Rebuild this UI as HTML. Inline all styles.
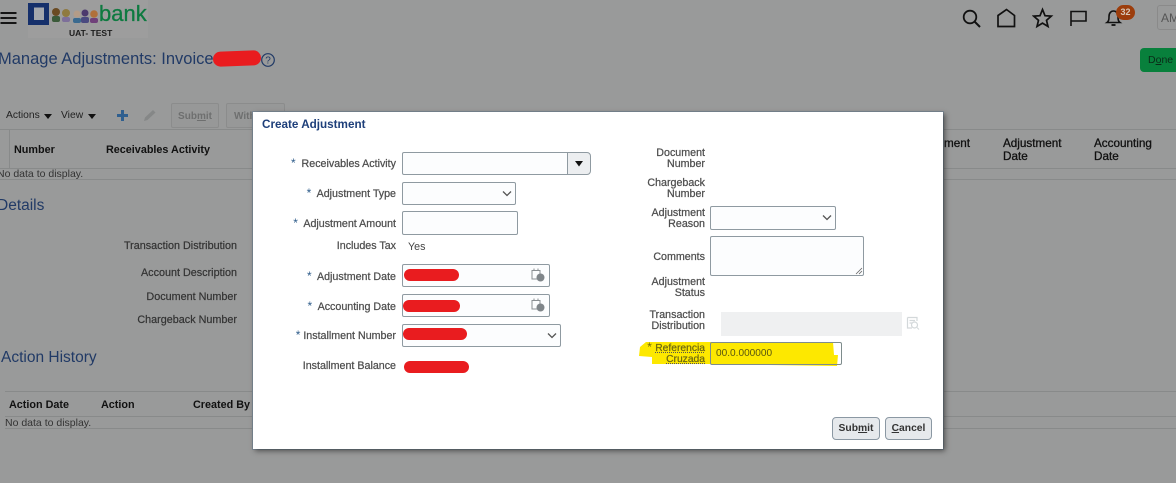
<!DOCTYPE html>
<html>
<head>
<meta charset="utf-8">
<style>
html,body{margin:0;padding:0;}
body{width:1176px;height:483px;overflow:hidden;position:relative;background:#999a9a;font-family:"Liberation Sans",sans-serif;}
.a{position:absolute;white-space:nowrap;}
.t{font-size:16.5px;color:#213a66;}
.h{font-size:10.8px;font-weight:bold;color:#111;line-height:12px;}
.n{font-size:11.7px;color:#111;-webkit-text-stroke:.3px #111;line-height:12.5px;}
.bl{font-size:10.8px;color:#333;-webkit-text-stroke:.2px #333;text-align:right;}
.l{font-size:10.7px;color:#4f4f4f;-webkit-text-stroke:.25px #4f4f4f;text-align:right;line-height:11px;}
.s{color:#2e5c8a;font-size:12px;-webkit-text-stroke:0;}
.i{background:#fcfdfe;border:1px solid #8f9aa1;border-radius:2px;box-sizing:border-box;}
.line{position:absolute;height:1px;background:#888a8a;}
.red{position:absolute;background:#e91c1f;border-radius:10px;}
.btn{position:absolute;box-sizing:border-box;border:1px solid #8b98a3;border-radius:4px;background:#e6e9ec;font-size:10.3px;font-weight:bold;color:#333;text-align:center;}
#m{position:absolute;left:253px;top:112px;width:690px;height:337px;background:#fff;box-shadow:2px 2px 5px rgba(40,40,40,.65),0 0 0 1px #7d8a96;}
</style>
</head>
<body>
<!-- header -->
<svg class="a" style="left:0;top:10px" width="18" height="16"><path d="M0.5 3H16.500M0.5 8H16.500M0.5 13H16.500" stroke="#151515" stroke-width="2"/></svg>
<div class="a" style="left:28px;top:0;width:120px;height:38px;background:#9d9d9d"></div>
<svg class="a" style="left:28px;top:2px" width="22" height="24"><rect x="0" y="1" width="21" height="22" fill="#16306b"/><path d="M6 5.500H16V18H6z" fill="#a5a8ad"/></svg>
<svg class="a" style="left:50px;top:6px" width="50" height="18">
<circle cx="6" cy="6" r="4" fill="#6a4a22"/><rect x="2" y="10" width="8" height="6" rx="2" fill="#3b5a3a"/>
<circle cx="16" cy="7" r="4" fill="#8f7a40"/><rect x="12" y="11" width="8" height="5" rx="2" fill="#7d6f9a"/>
<circle cx="27" cy="8" r="3.500" fill="#b39c88"/><rect x="23" y="12" width="8" height="5" rx="2" fill="#3a6a8f"/>
<circle cx="35" cy="7" r="3.500" fill="#4c3a6e"/><rect x="31" y="11" width="8" height="6" rx="2" fill="#4a4a80"/>
<circle cx="44" cy="8" r="3.800" fill="#b0703a"/><rect x="40" y="12" width="8" height="5" rx="2" fill="#70407a"/>
</svg>
<div class="a" style="left:99px;top:1px;font-size:22px;color:#0e7a40;-webkit-text-stroke:.3px #0e7a40">bank</div>
<div class="a" style="left:69px;top:28px;font-size:8.500px;font-weight:bold;color:#1c1c1c">UAT- TEST</div>

<div class="a t" style="left:-2px;top:50px;font-size:16.500px">Manage Adjustments: Invoice</div>
<div class="red" style="left:213px;top:51px;width:48px;height:15px;transform:rotate(-2deg)"></div>
<svg class="a" style="left:260px;top:52px" width="16" height="16"><circle cx="8" cy="8" r="6.300" fill="none" stroke="#213a66" stroke-width="1.200"/><text x="8" y="11.500" font-size="10" text-anchor="middle" fill="#213a66" font-family="Liberation Sans">?</text></svg>

<!-- header icons -->
<svg class="a" style="left:960px;top:6px" width="24" height="24"><circle cx="10" cy="11" r="6.300" fill="none" stroke="#111" stroke-width="1.800"/><path d="M14.500 15.500L20 21" stroke="#111" stroke-width="2"/></svg>
<svg class="a" style="left:996px;top:7px" width="22" height="22"><path d="M2 19.500V8.500L10.500 2.500L18.500 8.500V19.500Z" fill="none" stroke="#111" stroke-width="1.700"/></svg>
<svg class="a" style="left:1032px;top:7px" width="22" height="22"><path d="M10.500 2.500L13 8.700L19.300 9.100L14.500 13.300L16 19.500L10.500 16.100L5 19.500L6.500 13.300L1.700 9.100L8 8.700Z" fill="none" stroke="#111" stroke-width="1.700"/></svg>
<svg class="a" style="left:1068px;top:8px" width="22" height="20"><path d="M3 18V3.500H18V13H3" fill="none" stroke="#111" stroke-width="1.600"/></svg>
<svg class="a" style="left:1104px;top:8px" width="20" height="20"><path d="M3 14.500C5 13 5 11 5 8.500C5 5 7 3 9.500 3C12 3 14 5 14 8.500C14 11 14 13 16 14.500Z" fill="none" stroke="#111" stroke-width="1.600"/><path d="M7.500 17H11.500" stroke="#111" stroke-width="1.800"/></svg>
<div class="a" style="left:1116px;top:5px;width:19px;height:15px;border-radius:8px;background:#9c3d0c;color:#d8c8b8;font-size:9px;font-weight:bold;text-align:center;line-height:15px">32</div>
<div class="a" style="left:1157px;top:5px;width:30px;height:25px;box-sizing:border-box;border:1px solid #8a8a8a;border-radius:3px;color:#555;font-size:12px;line-height:24px;padding-left:3px">AM</div>
<div class="a" style="left:1140px;top:48px;width:50px;height:24px;background:#08803c;border-radius:4px;font-size:10.500px;line-height:24px;color:#0b2a18;padding-left:8px;box-sizing:border-box">D<u>o</u>ne</div>

<!-- toolbar -->
<div class="a" style="left:6px;top:110px;font-size:10.300px;color:#222">Actions</div>
<svg class="a" style="left:43px;top:113px" width="10" height="8"><path d="M1 1H9L5 6Z" fill="#111"/></svg>
<div class="a" style="left:61px;top:110px;font-size:10.300px;color:#222">View</div>
<svg class="a" style="left:87px;top:113px" width="10" height="8"><path d="M1 1H9L5 6Z" fill="#111"/></svg>
<svg class="a" style="left:116px;top:109px" width="13" height="13"><path d="M6.500 1V12M1 6.500H12" stroke="#2f5f8f" stroke-width="3"/></svg>
<svg class="a" style="left:142px;top:108px" width="15" height="15"><path d="M2 13L3 9.500L11 2L13.500 4.500L5.500 12Z" fill="#858787"/></svg>
<div class="a" style="left:171px;top:103px;width:48px;height:25px;box-sizing:border-box;border:1px solid #8b8c8c;border-radius:2px;background:#979898;font-size:10px;font-weight:bold;color:#6e6f6f;text-align:center;line-height:25px">Sub<u>m</u>it</div>
<div class="a" style="left:226px;top:103px;width:59px;height:25px;box-sizing:border-box;border:1px solid #8b8c8c;border-radius:2px;background:#979898;font-size:10px;font-weight:bold;color:#6e6f6f;line-height:25px;padding-left:7px">Withdraw</div>

<!-- table -->
<div class="line" style="left:0;top:129px;width:1176px"></div>
<div class="line" style="left:0;top:168px;width:1176px"></div>
<div class="line" style="left:0;top:179px;width:1176px"></div>
<div class="a" style="left:9px;top:130px;width:1px;height:38px;background:#888a8a"></div>
<div class="a h" style="left:14px;top:144px">Number</div>
<div class="a h" style="left:106px;top:144px">Receivables Activity</div>
<div class="a n" style="left:944px;top:138px">ment</div>
<div class="a n" style="left:1003px;top:138px">Adjustment<br>Date</div>
<div class="a n" style="left:1094px;top:138px">Accounting<br>Date</div>
<div class="a" style="left:-3px;top:168px;font-size:10.500px;color:#333">No data to display.</div>

<div class="a t" style="left:-3px;top:197px;font-size:15.500px">Details</div>
<div class="a bl" style="right:939px;top:240px">Transaction Distribution</div>
<div class="a bl" style="right:939px;top:267px">Account Description</div>
<div class="a bl" style="right:939px;top:291px">Document Number</div>
<div class="a bl" style="right:939px;top:314px">Chargeback Number</div>

<div class="a t" style="left:1px;top:349px;font-size:15.500px">Action History</div>
<div class="line" style="left:5px;top:391px;width:1171px"></div>
<div class="line" style="left:5px;top:416px;width:1171px"></div>
<div class="line" style="left:5px;top:428px;width:1171px"></div>
<div class="a h" style="left:9px;top:399px">Action Date</div>
<div class="a h" style="left:101px;top:399px">Action</div>
<div class="a h" style="left:193px;top:399px">Created By</div>
<div class="a" style="left:5px;top:417px;font-size:10.500px;color:#333">No data to display.</div>

<!-- modal -->
<div id="m"></div>
<div class="a" style="left:262px;top:118px;font-size:11.700px;font-weight:bold;color:#1e3f7a">Create Adjustment</div>

<div class="a l" style="right:780px;top:158px"><span class="s">*</span>&nbsp; Receivables Activity</div>
<div class="a i" style="left:402px;top:152px;width:167px;height:23px;border-radius:2px 0 0 2px"></div>
<div class="a" style="left:567px;top:152px;width:24px;height:23px;box-sizing:border-box;border:1px solid #8f9aa1;border-radius:0 4px 4px 0;background:#eceef0"></div>
<svg class="a" style="left:574px;top:160px" width="10" height="8"><path d="M1 1H9L5 6.500Z" fill="#111"/></svg>

<div class="a l" style="right:780px;top:188px"><span class="s">*</span>&nbsp; Adjustment Type</div>
<div class="a i" style="left:402px;top:182px;width:114px;height:23px"></div>
<svg class="a" style="left:501px;top:189px" width="12" height="9"><path d="M2 2.500L6 6.500L10 2.500" fill="none" stroke="#555" stroke-width="1.300"/></svg>

<div class="a l" style="right:780px;top:218px"><span class="s">*</span>&nbsp; Adjustment Amount</div>
<div class="a i" style="left:402px;top:211px;width:116px;height:24px"></div>

<div class="a l" style="right:780px;top:241px">Includes Tax</div>
<div class="a" style="left:408px;top:241px;font-size:10.700px;color:#444">Yes</div>

<div class="a l" style="right:780px;top:271px"><span class="s">*</span>&nbsp; Adjustment Date</div>
<div class="a i" style="left:402px;top:264px;width:148px;height:23px"></div>
<div class="red" style="left:404px;top:269px;width:55px;height:12px"></div>
<svg class="a" style="left:530px;top:267px" width="16" height="16"><path d="M2 3.500H10V12H2Z" fill="none" stroke="#8a8f92" stroke-width="1"/><path d="M4 1.500V4M8 1.500V4" stroke="#8a8f92"/><circle cx="10.500" cy="10.500" r="4" fill="#7f8589"/></svg>

<div class="a l" style="right:780px;top:301px"><span class="s">*</span>&nbsp; Accounting Date</div>
<div class="a i" style="left:402px;top:294px;width:148px;height:23px"></div>
<div class="red" style="left:403px;top:300px;width:57px;height:12px"></div>
<svg class="a" style="left:530px;top:297px" width="16" height="16"><path d="M2 3.500H10V12H2Z" fill="none" stroke="#8a8f92" stroke-width="1"/><path d="M4 1.500V4M8 1.500V4" stroke="#8a8f92"/><circle cx="10.500" cy="10.500" r="4" fill="#7f8589"/></svg>

<div class="a l" style="right:780px;top:330px"><span class="s">*</span>&nbsp;Installment Number</div>
<div class="a i" style="left:402px;top:324px;width:159px;height:23px"></div>
<div class="red" style="left:403px;top:328px;width:64px;height:12px"></div>
<svg class="a" style="left:546px;top:331px" width="12" height="9"><path d="M2 2.500L6 6.500L10 2.500" fill="none" stroke="#555" stroke-width="1.300"/></svg>

<div class="a l" style="right:780px;top:361px">Installment Balance</div>
<div class="red" style="left:404px;top:361px;width:65px;height:12px"></div>

<div class="a l" style="right:471px;top:148px">Document<br>Number</div>
<div class="a l" style="right:471px;top:178px">Chargeback<br>Number</div>
<div class="a l" style="right:471px;top:208px">Adjustment<br>Reason</div>
<div class="a i" style="left:710px;top:206px;width:126px;height:24px"></div>
<svg class="a" style="left:821px;top:213px" width="12" height="9"><path d="M2 2.500L6 6.500L10 2.500" fill="none" stroke="#555" stroke-width="1.300"/></svg>
<div class="a l" style="right:471px;top:252px">Comments</div>
<div class="a i" style="left:710px;top:236px;width:154px;height:40px"></div>
<svg class="a" style="left:855px;top:267px" width="8" height="8"><path d="M1 7L7 1M4 7L7 4" stroke="#666" stroke-width=".8"/></svg>
<div class="a l" style="right:471px;top:277px">Adjustment<br>Status</div>
<div class="a l" style="right:471px;top:310px">Transaction<br>Distribution</div>
<div class="a" style="left:721px;top:312px;width:181px;height:24px;background:#eff0f1"></div>
<svg class="a" style="left:906px;top:316px" width="14" height="15"><path d="M1.500 1.500H11V5M1.500 1.500V12H6M3.500 4.500H9M3.500 7H6" fill="none" stroke="#d3d8da" stroke-width="1.200"/><circle cx="8.500" cy="9" r="3" fill="none" stroke="#d3d8da" stroke-width="1.200"/><path d="M11 11.500L13 13.500" stroke="#d3d8da"/></svg>

<!-- highlighted -->
<svg class="a" style="left:638px;top:340px" width="202" height="30"><path d="M2 7L8 2H195L196 15H200L199 26L130 25L75 24H14V17L1 16Z" fill="#fde800"/></svg>
<div class="a" style="left:710px;top:342px;width:132px;height:23px;box-sizing:border-box;border:1px solid #7e8c8c;border-radius:2px"></div>
<div class="a l" style="right:471px;top:343px;font-size:10.300px;color:#6f6a10;-webkit-text-stroke:.25px #6f6a10;text-decoration:underline dotted #555"><span style="color:#6f6a10;position:absolute;left:-8px;top:-1px;font-size:12px;-webkit-text-stroke:0">*</span>Referencia<br>Cruzada</div>
<div class="a" style="left:716px;top:348px;font-size:10.100px;color:#5a5710">00.0.000000</div>

<div class="btn" style="left:832px;top:417px;width:48px;height:23px;line-height:22px">Sub<u>m</u>it</div>
<div class="btn" style="left:885px;top:417px;width:47px;height:23px;line-height:22px"><u>C</u>ancel</div>
</body>
</html>
